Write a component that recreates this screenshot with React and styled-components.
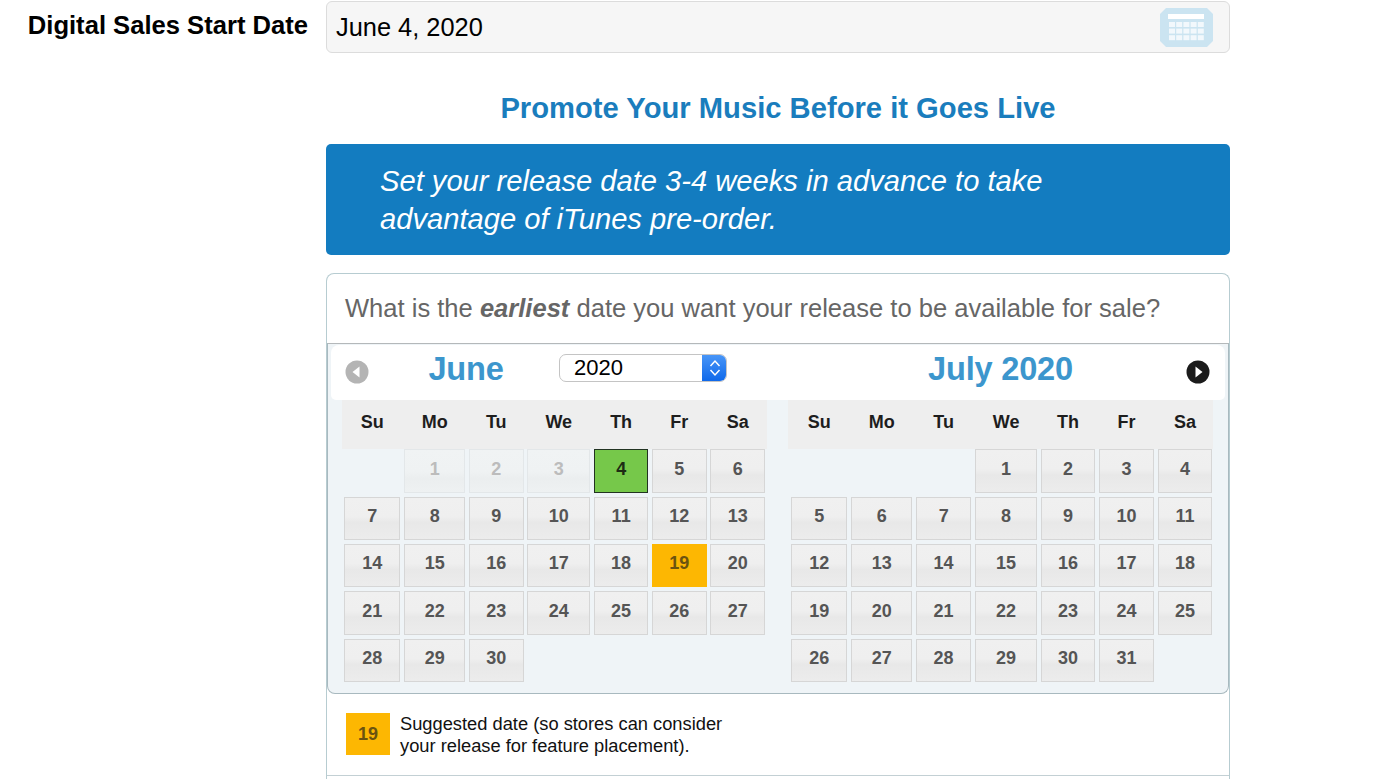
import React from "react";
import styled, { createGlobalStyle } from "styled-components";

const Global = createGlobalStyle`
  html, body { margin: 0; padding: 0; background: #fff; height: 779px; overflow: hidden; }
  body { font-family: "Liberation Sans", Arial, sans-serif; }
  * { box-sizing: border-box; }
`;

const Page = styled.div`
  display: grid;
  grid-template-columns: 326px 904px;
  padding-top: 1px;
  height: 779px;
  overflow: hidden;
`;
const FieldLabel = styled.div`
  font-size: 25.6px;
  font-weight: 700;
  color: #000;
  text-align: right;
  padding: 10px 18px 0 0;
  line-height: 28px;
  white-space: nowrap;
`;
const Content = styled.div`
  display: flex;
  flex-direction: column;
`;
const DateInput = styled.div`
  height: 52px;
  background: #f6f6f6;
  border: 1px solid #dcdcdc;
  border-radius: 6px;
  display: flex;
  align-items: center;
  justify-content: space-between;
  padding: 0 16px 0 9px;
  font-size: 25.4px;
  color: #000;
`;
const Heading = styled.h2`
  margin: 36px 0 0;
  height: 38px;
  font-size: 29.2px;
  line-height: 38px;
  font-weight: 700;
  color: #1a7dbd;
  text-align: center;
`;
const Banner = styled.div`
  margin-top: 17px;
  height: 111px;
  background: #137cc0;
  border-radius: 5px;
  padding: 18px 54px 0;
  color: #fff;
  font-size: 29.15px;
  line-height: 38px;
  font-style: italic;
`;
const Card = styled.div`
  margin-top: 18px;
  flex: 1;
  border: 1px solid #b7ccd1;
  border-bottom: 0;
  border-radius: 8px 8px 0 0;
`;
const Question = styled.div`
  height: 69px;
  padding: 18px 0 0 18px;
  font-size: 25.55px;
  line-height: 32px;
  color: #666;
  b { font-style: italic; }
`;
const Calendar = styled.div`
  height: 351px;
  background: #eff4f7;
  border: 1px solid #a8b9bf;
  border-top-color: #b4b8ba;
  border-radius: 0 0 8px 8px;
  padding: 1px 3px 0;
`;
const CalHeader = styled.div`
  height: 55px;
  background: #fff;
  border-radius: 8px 8px 5px 5px;
  display: flex;
  align-items: flex-start;
  padding: 0 15px 0 14px;
`;
const NavButton = styled.svg`
  width: 24px;
  height: 24px;
  margin-top: 15px;
  flex: none;
`;
const MonthTitle = styled.div`
  font-size: 32.6px;
  letter-spacing: -0.2px;
  font-weight: 700;
  color: #3c96cd;
  line-height: 48px;
  text-align: center;
  flex: ${p => (p.$grow ? 1 : "none")};
  width: ${p => (p.$grow ? "auto" : "190px")};
  padding-left: ${p => (p.$grow ? "88px" : "4px")};
`;
const YearSelect = styled.div`
  flex: none;
  margin-top: 9px;
  width: 168px;
  height: 28px;
  background: #fff;
  border: 1px solid #c4c4c4;
  border-radius: 7px;
  display: flex;
  align-items: center;
  justify-content: space-between;
  padding-left: 14px;
  font-size: 22px;
  color: #000;
  overflow: hidden;
`;
const SelectArrows = styled.span`
  width: 25px;
  height: 28px;
  margin-right: -1px;
  background: linear-gradient(#4a97f8, #0d67ea);
  display: flex;
  align-items: center;
  justify-content: center;
`;
const Months = styled.div`
  display: flex;
  gap: 21px;
  padding-left: 11px;
`;
const Month = styled.div`
  width: 425px;
`;
const Weekdays = styled.div`
  display: grid;
  grid-template-columns: ${p => p.$tracks};
  column-gap: 3.67px;
  background: #eeeeee;
  height: 49px;
  padding-left: ${p => p.$inset}px;
`;
const Weekday = styled.div`
  font-size: 18px;
  font-weight: 700;
  color: #1d1d1d;
  line-height: 44px;
  text-align: center;
`;
const Days = styled.div`
  display: grid;
  grid-template-columns: ${p => p.$tracks};
  grid-template-rows: 44px 43px 43px 44px 43px;
  gap: 4px 3.67px;
  padding-left: ${p => p.$inset}px;
`;
const cellBg = {
  normal: "linear-gradient(#f0f0f0 0%, #efefef 45%, #e8e8e8 60%, #ececec 100%)",
  muted: "linear-gradient(#f0f3f4 0%, #eff2f3 50%, #ebeeef 68%, #eef1f2 100%)",
  today: "#76c84a",
  suggested: "#fdb702",
};
const cellBorder = { normal: "#d6d6d6", muted: "#e3e7e9", today: "#223322", suggested: "#fdb702" };
const cellColor = { normal: "#555", muted: "#bcbcbc", today: "#1d2b14", suggested: "#6b5310" };
const Day = styled.div`
  display: flex;
  align-items: center;
  justify-content: center;
  font-size: 18px;
  font-weight: 700;
  padding-bottom: 4px;
  background: ${p => cellBg[p.$kind]};
  border: 1px solid ${p => cellBorder[p.$kind]};
  color: ${p => cellColor[p.$kind]};
`;
const Blank = styled.div``;
const Legend = styled.div`
  height: 82px;
  display: flex;
  align-items: flex-start;
  gap: 10px;
  padding: 19px 0 0 19px;
  border-bottom: 1px solid #c3d0d4;
`;
const Swatch = styled.div`
  width: 44px;
  height: 42px;
  background: #fdb702;
  color: #6b5310;
  font-size: 18px;
  font-weight: 700;
  display: flex;
  align-items: center;
  justify-content: center;
`;
const LegendText = styled.div`
  font-size: 18.3px;
  line-height: 22px;
  color: #111;
`;

const week = ["Su", "Mo", "Tu", "We", "Th", "Fr", "Sa"];
const JUNE_TRACKS = "56.33px 61.33px 54.6px 63.1px 54.33px 54.6px 55px";
const JULY_TRACKS = "56.33px 61.33px 55.33px 62.33px 54.33px 55.33px 54px";

function kindOf(month, d) {
  if (month !== "june") return "normal";
  if (d < 4) return "muted";
  if (d === 4) return "today";
  if (d === 19) return "suggested";
  return "normal";
}

function MonthGrid({ id, lead, count, tracks, inset }) {
  return (
    <Month>
      <Weekdays $tracks={tracks} $inset={inset}>
        {week.map(w => <Weekday key={w}>{w}</Weekday>)}
      </Weekdays>
      <Days $tracks={tracks} $inset={inset}>
        {Array.from({ length: lead }, (_, i) => <Blank key={i} />)}
        {Array.from({ length: count }, (_, i) => (
          <Day key={i} $kind={kindOf(id, i + 1)}>{i + 1}</Day>
        ))}
      </Days>
    </Month>
  );
}

const CalendarIcon = () => (
  <svg width="53" height="39" viewBox="0 0 53 39">
    <path d="M6 0H47L53 6V33L47 39H6L0 33V6Z" fill="#cbe4f1" />
    <rect x="8" y="6" width="36" height="5" fill="#fff" />
    {[0, 1, 2].map(r =>
      [0, 1, 2, 3, 4].map(c => (
        <rect key={`${r}-${c}`} x={9 + c * 7.2} y={14 + r * 6.6} width="6" height="5" fill="#fff" opacity="0.75" />
      ))
    )}
  </svg>
);

export default function App() {
  return (
    <>
      <Global />
      <Page>
        <FieldLabel>Digital Sales Start Date</FieldLabel>
        <Content>
          <DateInput>
            June 4, 2020
            <CalendarIcon />
          </DateInput>
          <Heading>Promote Your Music Before it Goes Live</Heading>
          <Banner>
            Set your release date 3-4 weeks in advance to take<br />
            advantage of iTunes pre-order.
          </Banner>
          <Card>
            <Question>What is the <b>earliest</b> date you want your release to be available for sale?</Question>
            <Calendar>
              <CalHeader>
                <NavButton viewBox="0 0 24 24">
                  <circle cx="12" cy="12" r="11.5" fill="#b4b4b4" />
                  <path d="M14.5 6.5V17.5L7.5 12Z" fill="#fff" />
                </NavButton>
                <MonthTitle>June</MonthTitle>
                <YearSelect>
                  2020
                  <SelectArrows>
                    <svg width="14" height="22" viewBox="0 0 14 22" fill="none" stroke="#fff" strokeWidth="1.5">
                      <path d="M2.5 9L7 4L11.5 9M2.5 13L7 18L11.5 13" />
                    </svg>
                  </SelectArrows>
                </YearSelect>
                <MonthTitle $grow>July 2020</MonthTitle>
                <NavButton viewBox="0 0 24 24">
                  <circle cx="12" cy="12" r="11.5" fill="#1b1b1b" />
                  <path d="M9.5 6.5V17.5L16.5 12Z" fill="#fff" />
                </NavButton>
              </CalHeader>
              <Months>
                <MonthGrid id="june" lead={1} count={30} tracks={JUNE_TRACKS} inset={2} />
                <MonthGrid id="july" lead={3} count={31} tracks={JULY_TRACKS} inset={3} />
              </Months>
            </Calendar>
            <Legend>
              <Swatch>19</Swatch>
              <LegendText>
                Suggested date (so stores can consider<br />
                your release for feature placement).
              </LegendText>
            </Legend>
          </Card>
        </Content>
      </Page>
    </>
  );
}
